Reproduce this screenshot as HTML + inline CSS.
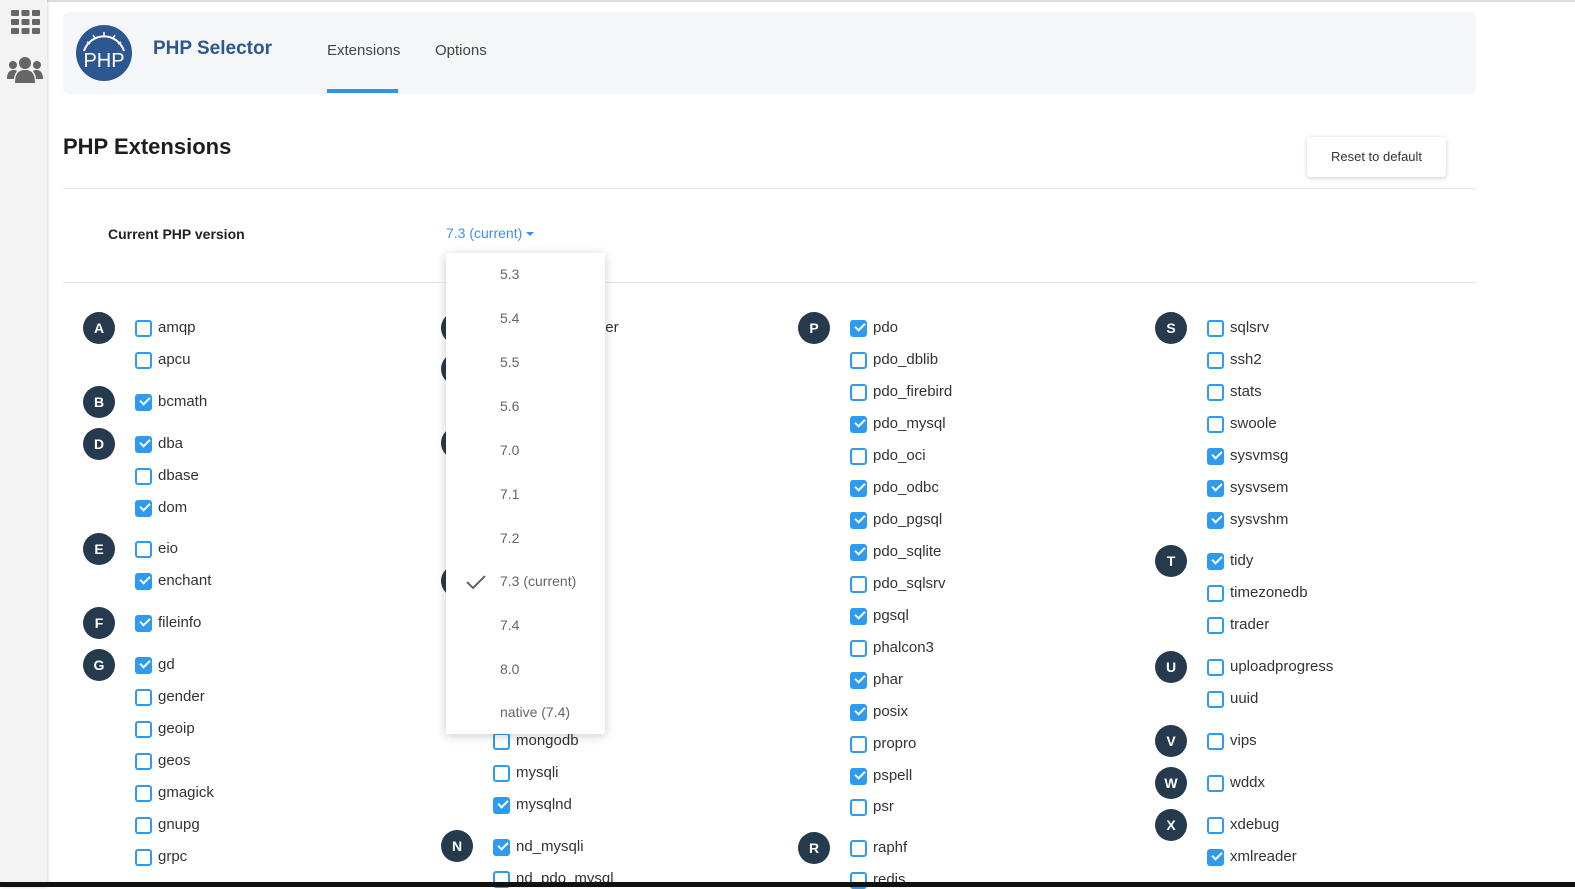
<!DOCTYPE html>
<html><head><meta charset="utf-8"><style>
*{margin:0;padding:0;box-sizing:border-box}
body{width:1575px;height:887px;overflow:hidden;background:#fff;font-family:"Liberation Sans",sans-serif;position:relative}
.side{position:absolute;left:0;top:0;width:47px;height:887px;background:#f3f3f3;box-shadow:1px 0 3px rgba(0,0,0,.15)}
.hdr{position:absolute;left:63px;top:12px;width:1413px;height:82px;background:#f5f6f8;border-radius:6px}
.abs{position:absolute}
.it{position:absolute;height:18px;line-height:18px;font-size:15px;color:#333;padding-left:23px;white-space:nowrap}
.it::before{content:"";position:absolute;left:0;top:1px;width:17px;height:17px;border:2px solid #2e9bf0;border-radius:3px;box-sizing:border-box;background:#fff}
.it.c::before{background:#2e9bf0}
.it.c::after{content:"";position:absolute;left:5px;top:4px;width:8px;height:4px;border-left:2px solid #fff;border-bottom:2px solid #fff;transform:rotate(-45deg)}
.L{position:absolute;width:32px;height:32px;border-radius:50%;background:#263a4e;color:#fff;font-size:14px;font-weight:bold;text-align:center;line-height:32px}
.dd{position:absolute;left:446px;top:253px;width:159px;height:481px;background:#fff;box-shadow:0 2px 10px rgba(0,0,0,.2)}
.dd div{position:absolute;left:54px;font-size:14px;color:#666;height:20px;line-height:20px}
</style></head><body>
<div class="abs" style="left:0;top:0;width:1575px;height:2px;background:#ddd"></div>
<div class="side">
<svg class="abs" style="left:11px;top:10px" width="29" height="25" viewBox="0 0 29 25" fill="#666"><rect x="0" y="0" width="8" height="6" rx="1"/><rect x="10.5" y="0" width="8" height="6" rx="1"/><rect x="21" y="0" width="8" height="6" rx="1"/><rect x="0" y="9" width="8" height="6" rx="1"/><rect x="10.5" y="9" width="8" height="6" rx="1"/><rect x="21" y="9" width="8" height="6" rx="1"/><rect x="0" y="18" width="8" height="6" rx="1"/><rect x="10.5" y="18" width="8" height="6" rx="1"/><rect x="21" y="18" width="8" height="6" rx="1"/></svg>
<svg class="abs" style="left:7px;top:57px" width="36" height="26" viewBox="0 0 36 26" fill="#666"><circle cx="18" cy="6" r="6"/><circle cx="6" cy="8" r="4"/><circle cx="30" cy="8" r="4"/><path d="M8 26 C8 16 12 13 18 13 C24 13 28 16 28 26Z"/><path d="M0 22 C0 15 3 13 7 13 C9 13 10 14 10 14 C8 17 7 19 7 22Z"/><path d="M36 22 C36 15 33 13 29 13 C27 13 26 14 26 14 C28 17 29 19 29 22Z"/></svg>
</div>
<div class="hdr"></div>
<svg class="abs" style="left:76px;top:25px" width="56" height="56" viewBox="0 0 56 56"><circle cx="28" cy="28" r="28" fill="#2d5791"/><path d="M8 26 A21 21 0 0 1 48 26" stroke="#fff" stroke-width="2" fill="none"/><g stroke="#fff" stroke-width="1.5"><line x1="28" y1="7" x2="28" y2="11"/><line x1="17" y1="10" x2="19" y2="13"/><line x1="39" y1="10" x2="37" y2="13"/><line x1="11" y1="17" x2="14" y2="19"/><line x1="45" y1="17" x2="42" y2="19"/></g><text x="28" y="42" text-anchor="middle" font-family="Liberation Sans" font-size="20" fill="#fff">PHP</text></svg>
<div class="abs" style="left:153px;top:38px;font-size:19px;font-weight:bold;color:#2d5791">PHP Selector</div>
<div class="abs" style="left:327px;top:42px;font-size:15px;color:#444">Extensions</div>
<div class="abs" style="left:327px;top:89px;width:71px;height:4px;background:#2e96e8"></div>
<div class="abs" style="left:435px;top:42px;font-size:15px;color:#444">Options</div>
<div class="abs" style="left:63px;top:134px;font-size:22px;font-weight:bold;color:#1e1e1e">PHP Extensions</div>
<div class="abs" style="left:1307px;top:137px;width:139px;height:40px;background:#fff;border-radius:3px;box-shadow:0 1px 5px rgba(0,0,0,.2);font-size:13px;color:#333;text-align:center;line-height:40px">Reset to default</div>
<div class="abs" style="left:63px;top:188px;width:1413px;height:1px;background:#e6e6e6"></div>
<div class="abs" style="left:108px;top:226px;font-size:14px;font-weight:bold;color:#222">Current PHP version</div>
<div class="abs" style="left:446px;top:225px;font-size:14px;color:#3d8ef0">7.3 (current) <span style="display:inline-block;border-left:4px solid transparent;border-right:4px solid transparent;border-top:4px solid #3d8ef0;vertical-align:middle"></span></div>
<div class="abs" style="left:63px;top:282px;width:1413px;height:1px;background:#e6e6e6"></div>

<div class="L" style="left:83px;top:312px">A</div>
<div class="it" style="left:135px;top:319px">amqp</div>
<div class="it" style="left:135px;top:351px">apcu</div>
<div class="L" style="left:83px;top:386px">B</div>
<div class="it c" style="left:135px;top:393px">bcmath</div>
<div class="L" style="left:83px;top:428px">D</div>
<div class="it c" style="left:135px;top:435px">dba</div>
<div class="it" style="left:135px;top:467px">dbase</div>
<div class="it c" style="left:135px;top:499px">dom</div>
<div class="L" style="left:83px;top:533px">E</div>
<div class="it" style="left:135px;top:540px">eio</div>
<div class="it c" style="left:135px;top:572px">enchant</div>
<div class="L" style="left:83px;top:607px">F</div>
<div class="it c" style="left:135px;top:614px">fileinfo</div>
<div class="L" style="left:83px;top:649px">G</div>
<div class="it c" style="left:135px;top:656px">gd</div>
<div class="it" style="left:135px;top:688px">gender</div>
<div class="it" style="left:135px;top:720px">geoip</div>
<div class="it" style="left:135px;top:752px">geos</div>
<div class="it" style="left:135px;top:784px">gmagick</div>
<div class="it" style="left:135px;top:816px">gnupg</div>
<div class="it" style="left:135px;top:848px">grpc</div>

<div class="L" style="left:441px;top:312px">I</div>
<div class="it" style="left:493px;top:319px">ioncube_loader</div>
<div class="L" style="left:441px;top:353px">J</div>
<div class="L" style="left:441px;top:427px">L</div>
<div class="L" style="left:441px;top:565px">M</div>
<div class="it" style="left:493px;top:732px">mongodb</div>
<div class="it" style="left:493px;top:764px">mysqli</div>
<div class="it c" style="left:493px;top:796px">mysqlnd</div>
<div class="L" style="left:441px;top:830px">N</div>
<div class="it c" style="left:493px;top:838px">nd_mysqli</div>
<div class="it" style="left:493px;top:870px">nd_pdo_mysql</div>

<div class="L" style="left:798px;top:312px">P</div>
<div class="it c" style="left:850px;top:319px">pdo</div>
<div class="it" style="left:850px;top:351px">pdo_dblib</div>
<div class="it" style="left:850px;top:383px">pdo_firebird</div>
<div class="it c" style="left:850px;top:415px">pdo_mysql</div>
<div class="it" style="left:850px;top:447px">pdo_oci</div>
<div class="it c" style="left:850px;top:479px">pdo_odbc</div>
<div class="it c" style="left:850px;top:511px">pdo_pgsql</div>
<div class="it c" style="left:850px;top:543px">pdo_sqlite</div>
<div class="it" style="left:850px;top:575px">pdo_sqlsrv</div>
<div class="it c" style="left:850px;top:607px">pgsql</div>
<div class="it" style="left:850px;top:639px">phalcon3</div>
<div class="it c" style="left:850px;top:671px">phar</div>
<div class="it c" style="left:850px;top:703px">posix</div>
<div class="it" style="left:850px;top:735px">propro</div>
<div class="it c" style="left:850px;top:767px">pspell</div>
<div class="it" style="left:850px;top:798px">psr</div>
<div class="L" style="left:798px;top:832px">R</div>
<div class="it" style="left:850px;top:839px">raphf</div>
<div class="it" style="left:850px;top:871px">redis</div>

<div class="L" style="left:1155px;top:312px">S</div>
<div class="it" style="left:1207px;top:319px">sqlsrv</div>
<div class="it" style="left:1207px;top:351px">ssh2</div>
<div class="it" style="left:1207px;top:383px">stats</div>
<div class="it" style="left:1207px;top:415px">swoole</div>
<div class="it c" style="left:1207px;top:447px">sysvmsg</div>
<div class="it c" style="left:1207px;top:479px">sysvsem</div>
<div class="it c" style="left:1207px;top:511px">sysvshm</div>
<div class="L" style="left:1155px;top:545px">T</div>
<div class="it c" style="left:1207px;top:552px">tidy</div>
<div class="it" style="left:1207px;top:584px">timezonedb</div>
<div class="it" style="left:1207px;top:616px">trader</div>
<div class="L" style="left:1155px;top:651px">U</div>
<div class="it" style="left:1207px;top:658px">uploadprogress</div>
<div class="it" style="left:1207px;top:690px">uuid</div>
<div class="L" style="left:1155px;top:725px">V</div>
<div class="it" style="left:1207px;top:732px">vips</div>
<div class="L" style="left:1155px;top:767px">W</div>
<div class="it" style="left:1207px;top:774px">wddx</div>
<div class="L" style="left:1155px;top:809px">X</div>
<div class="it" style="left:1207px;top:816px">xdebug</div>
<div class="it c" style="left:1207px;top:848px">xmlreader</div>

<div class="dd">
<div style="top:11px">5.3</div>
<div style="top:55px">5.4</div>
<div style="top:99px">5.5</div>
<div style="top:143px">5.6</div>
<div style="top:187px">7.0</div>
<div style="top:231px">7.1</div>
<div style="top:275px">7.2</div>
<div style="top:318px">7.3 (current)</div>
<svg style="position:absolute;left:20px;top:321px" width="20" height="16" viewBox="0 0 20 16"><path d="M1 8 L7 14 L19 2" stroke="#666" stroke-width="2" fill="none"/></svg>
<div style="top:362px">7.4</div>
<div style="top:406px">8.0</div>
<div style="top:449px">native (7.4)</div>
</div>
<div class="abs" style="left:0;top:882px;width:1575px;height:5px;background:#111"></div>
</body></html>
